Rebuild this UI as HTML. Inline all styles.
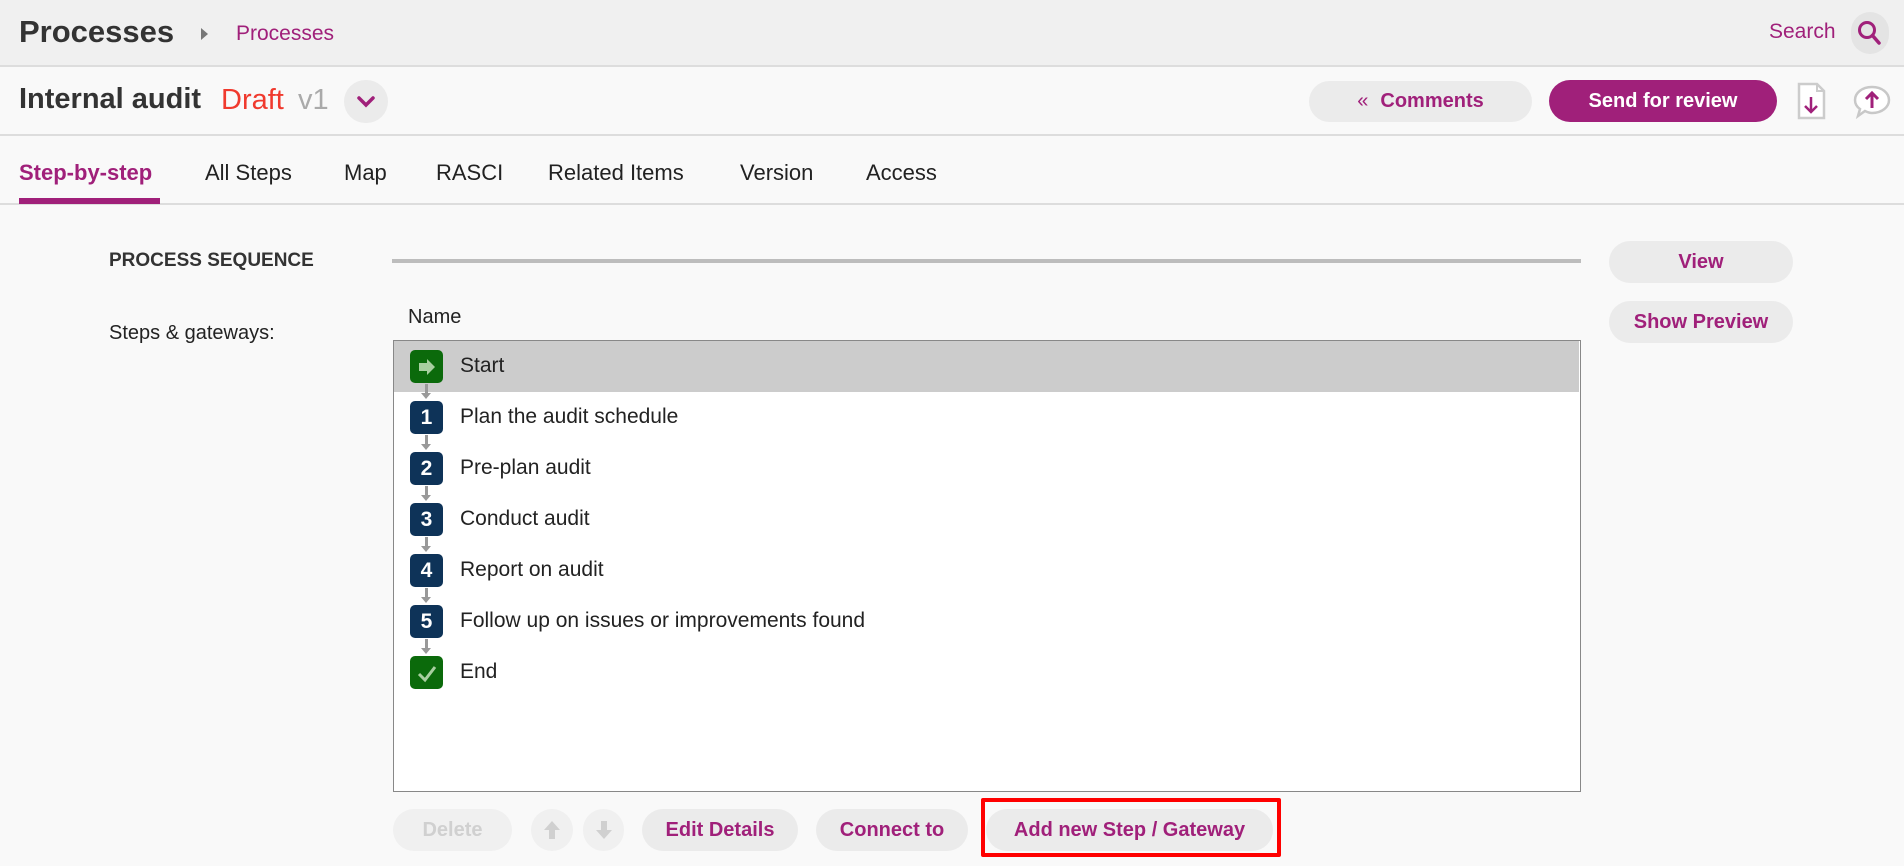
<!DOCTYPE html>
<html><head><meta charset="utf-8"><style>
*{margin:0;padding:0;box-sizing:border-box}
body{width:1904px;height:866px;overflow:hidden;background:#f9f9f9;font-family:"Liberation Sans",Arial,sans-serif;color:#222;position:relative}
.a{position:absolute}
.btn{position:absolute;background:#ebebeb;border-radius:22px;color:#a0207a;font-weight:bold;font-size:20px;display:flex;align-items:center;justify-content:center}
.row{position:absolute;left:0;width:1185px;height:51px}
.ic{position:absolute;left:16px;width:33px;height:33px;border-radius:5px;background:#0e3358;color:#fff;font-weight:bold;font-size:21px;display:flex;align-items:center;justify-content:center}
.tx{position:absolute;left:66px;font-size:21px;color:#222}
.ar{position:absolute;left:31px;width:3px;height:12px;background:#999}
.ar:after{content:"";position:absolute;left:-4px;top:9px;border-left:5.5px solid transparent;border-right:5.5px solid transparent;border-top:6px solid #999}
</style></head><body>
<div class="a" style="left:0;top:0;width:1904px;height:67px;background:#f0f0f0;border-bottom:2px solid #ddd"></div>
<div class="a" style="left:19px;top:14px;font-size:31px;font-weight:bold;color:#333">Processes</div>
<div class="a" style="left:201px;top:28px;border-top:6px solid transparent;border-bottom:6px solid transparent;border-left:7px solid #777"></div>
<div class="a" style="left:236px;top:22px;font-size:21px;color:#a0207a">Processes</div>
<div class="a" style="left:1769px;top:20px;font-size:21px;color:#a0207a">Search</div>
<div class="a" style="left:1851px;top:12px;width:38px;height:42px;border-radius:20px;background:#e4e4e4"></div>
<svg class="a" style="left:1855px;top:18px" width="30" height="30" viewBox="0 0 30 30"><circle cx="12" cy="12" r="7.5" fill="none" stroke="#a0207a" stroke-width="3"/><line x1="17.5" y1="17.5" x2="24" y2="25" stroke="#a0207a" stroke-width="3.5" stroke-linecap="round"/></svg>

<div class="a" style="left:0;top:134px;width:1904px;height:2px;background:#ddd"></div>
<div class="a" style="left:19px;top:83px;font-size:29px;font-weight:bold;color:#333">Internal audit</div>
<div class="a" style="left:221px;top:84px;font-size:29px;color:#f03a2e">Draft</div>
<div class="a" style="left:298px;top:84px;font-size:29px;color:#aaa">v1</div>
<div class="a" style="left:344px;top:80px;width:44px;height:43px;border-radius:22px;background:#ebebeb"></div>
<svg class="a" style="left:354px;top:90px" width="24" height="24" viewBox="0 0 24 24"><path d="M5 8 L12 15 L19 8" fill="none" stroke="#a0207a" stroke-width="3.5" stroke-linecap="round"/></svg>
<div class="btn" style="left:1309px;top:81px;width:223px;height:41px"><span style="font-weight:normal;margin-right:12px">«</span>Comments</div>
<div class="btn" style="left:1549px;top:80px;width:228px;height:42px;background:#a0207a;color:#fff">Send for review</div>
<svg class="a" style="left:1796px;top:82px" width="32" height="38" viewBox="0 0 32 38"><path d="M3 2 H21 L28 9 V36 H3 Z" fill="#fff" stroke="#ccc" stroke-width="2.5"/><path d="M21 2 V9 H28" fill="none" stroke="#ccc" stroke-width="2"/><path d="M15 15 V30 M9 24 L15 30 L21 24" fill="none" stroke="#a0207a" stroke-width="2.5"/></svg>
<svg class="a" style="left:1852px;top:84px" width="40" height="36" viewBox="0 0 40 36"><path d="M20 3 C30 3 37 9 37 16 C37 23 30 29 20 29 C17 29 15 28 13 27 L6 32 L8 25 C5 23 3 20 3 16 C3 9 10 3 20 3 Z" fill="#fff" stroke="#c8c8c8" stroke-width="2.5"/><path d="M20 24 V9 M14 15 L20 9 L26 15" fill="none" stroke="#a0207a" stroke-width="3"/></svg>

<div class="a" style="left:0;top:203px;width:1904px;height:2px;background:#ddd"></div>
<div class="a" style="left:19px;top:160px;font-size:22px;font-weight:bold;color:#a0207a">Step-by-step</div>
<div class="a" style="left:19px;top:198px;width:141px;height:6px;background:#a0207a"></div>
<div class="a" style="left:205px;top:160px;font-size:22px">All Steps</div>
<div class="a" style="left:344px;top:160px;font-size:22px">Map</div>
<div class="a" style="left:436px;top:160px;font-size:22px">RASCI</div>
<div class="a" style="left:548px;top:160px;font-size:22px">Related Items</div>
<div class="a" style="left:740px;top:160px;font-size:22px">Version</div>
<div class="a" style="left:866px;top:160px;font-size:22px">Access</div>

<div class="a" style="left:109px;top:250px;font-size:19px;font-weight:bold;color:#333">PROCESS SEQUENCE</div>
<div class="a" style="left:392px;top:259px;width:1189px;height:4px;background:#bdbdbd"></div>
<div class="btn" style="left:1609px;top:241px;width:184px;height:42px">View</div>
<div class="btn" style="left:1609px;top:301px;width:184px;height:42px">Show Preview</div>
<div class="a" style="left:408px;top:306px;font-size:20px">Name</div>
<div class="a" style="left:109px;top:322px;font-size:20px">Steps &amp; gateways:</div>

<div class="a" style="left:393px;top:340px;width:1188px;height:452px;background:#fff;border:1.5px solid #888">
 <div class="row" style="top:0;background:#ccc"><div class="ic" style="top:9px;background:#0b6a0b"><svg width="22" height="22" viewBox="0 0 22 22"><path d="M3 7 H11 V3 L19 11 L11 19 V15 H3 Z" fill="#a8cfa0"/></svg></div><div class="tx" style="top:13px">Start</div></div>
 <div class="ar" style="top:43px"></div>
 <div class="row" style="top:51px"><div class="ic" style="top:9px">1</div><div class="tx" style="top:13px">Plan the audit schedule</div></div>
 <div class="ar" style="top:94px"></div>
 <div class="row" style="top:102px"><div class="ic" style="top:9px">2</div><div class="tx" style="top:13px">Pre-plan audit</div></div>
 <div class="ar" style="top:145px"></div>
 <div class="row" style="top:153px"><div class="ic" style="top:9px">3</div><div class="tx" style="top:13px">Conduct audit</div></div>
 <div class="ar" style="top:196px"></div>
 <div class="row" style="top:204px"><div class="ic" style="top:9px">4</div><div class="tx" style="top:13px">Report on audit</div></div>
 <div class="ar" style="top:247px"></div>
 <div class="row" style="top:255px"><div class="ic" style="top:9px">5</div><div class="tx" style="top:13px">Follow up on issues or improvements found</div></div>
 <div class="ar" style="top:298px"></div>
 <div class="row" style="top:306px"><div class="ic" style="top:9px;background:#0b6a0b"><svg width="24" height="24" viewBox="0 0 24 24"><path d="M4 13 L10 19 L20 6" fill="none" stroke="#a8cfa0" stroke-width="3"/></svg></div><div class="tx" style="top:13px">End</div></div>
</div>

<div class="btn" style="left:393px;top:809px;width:119px;height:42px;background:#f0f0f0;color:#d0d0d0">Delete</div>
<div class="btn" style="left:531px;top:809px;width:42px;height:42px;background:#f0f0f0"><svg width="20" height="22" viewBox="0 0 20 22"><path d="M10 2 L18 11 H13 V20 H7 V11 H2 Z" fill="#d0d0d0"/></svg></div>
<div class="btn" style="left:583px;top:809px;width:41px;height:42px;background:#f0f0f0"><svg width="20" height="22" viewBox="0 0 20 22"><path d="M10 20 L18 11 H13 V2 H7 V11 H2 Z" fill="#d0d0d0"/></svg></div>
<div class="btn" style="left:642px;top:809px;width:156px;height:42px">Edit Details</div>
<div class="btn" style="left:816px;top:809px;width:152px;height:42px">Connect to</div>
<div class="btn" style="left:986px;top:809px;width:287px;height:42px">Add new Step / Gateway</div>
<div class="a" style="left:981px;top:798px;width:300px;height:59px;border:4px solid #f00;border-radius:2px"></div>
</body></html>
